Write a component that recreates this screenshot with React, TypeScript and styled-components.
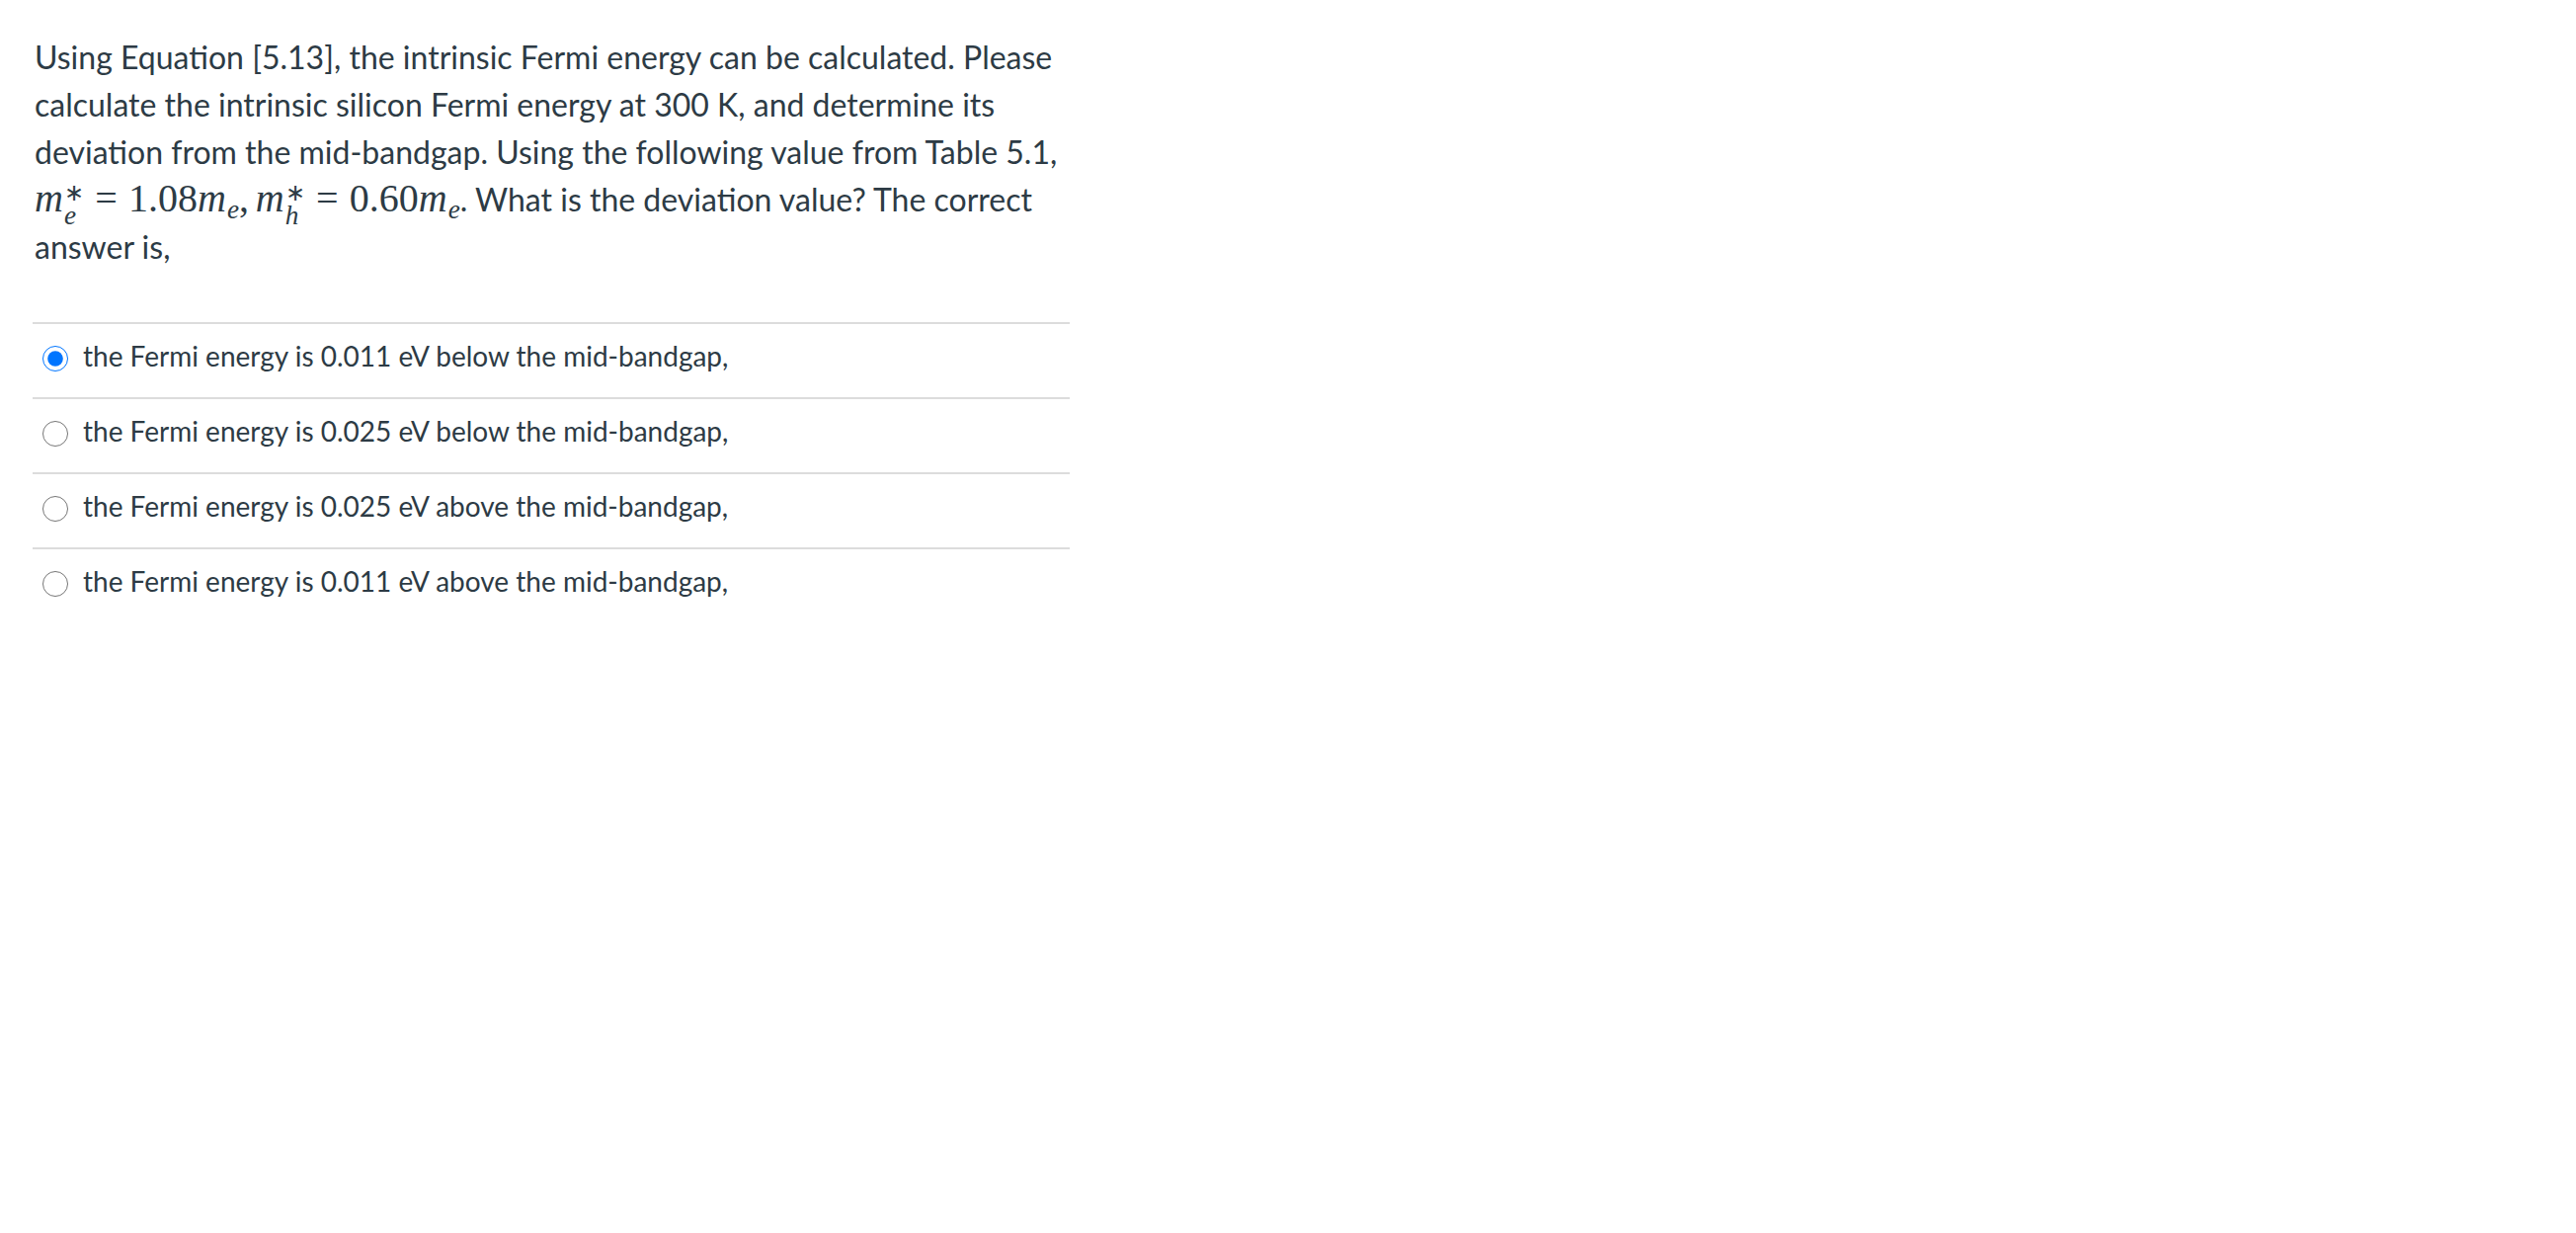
import styled, { createGlobalStyle } from "styled-components";

const GlobalStyle = createGlobalStyle`
  html, body {
    margin: 0;
    padding: 0;
    background: #ffffff;
  }
  body {
    font-family: Lato, "Open Sans", sans-serif;
    color: #2d3b45;
  }
`;

const Page = styled.main`
  padding: 34px 0 0 33px;
`;

const Question = styled.section`
  width: 1050px;
`;

const QuestionText = styled.p`
  margin: 0;
  padding-left: 2px;
  font-size: 32px;
  line-height: 48px;
  color: #2d3b45;
`;

const Formula = styled.span`
  font-family: "Liberation Serif", "Times New Roman", serif;
  font-size: 40px;
  line-height: 0;
  white-space: nowrap;
`;

const Var = styled.i`
  font-style: italic;
`;

const Rel = styled.span`
  margin: 0 0.28em;
`;

const Punct = styled.span`
  margin-right: 0.17em;
`;

// stacked super/subscript; negative margins keep the line box at 48px
const Scripts = styled.span`
  display: inline-flex;
  flex-direction: column;
  vertical-align: 0.4em;
  font-size: 0.68em;
  line-height: 0.9;
  margin: -0.4em 0 -1.3em 0.04em;
`;

const Star = styled.span`
  font-size: 0.9em;
`;

const Sub = styled.i<{ $alone?: boolean }>`
  font-style: italic;
  ${({ $alone }) =>
    $alone &&
    `
    font-size: 0.68em;
    vertical-align: -0.24em;
    margin-left: 0.04em;
    line-height: 0;
  `}
`;

const AnswerList = styled.div`
  margin-top: 52px;
`;

const AnswerRow = styled.label<{ $last?: boolean }>`
  display: flex;
  align-items: center;
  border-top: 2px solid #dcdcdc;
  padding: 8px 0 ${({ $last }) => ($last ? "8px" : "18px")};
  cursor: pointer;
`;

const Radio = styled.input`
  width: 26px;
  height: 26px;
  margin: 6px 15px 0 10px;
  flex: none;
`;

const AnswerText = styled.span`
  font-size: 28px;
  line-height: 48px;
  color: #2d3b45;
`;

const answers = [
  "the Fermi energy is 0.011 eV below the mid-bandgap,",
  "the Fermi energy is 0.025 eV below the mid-bandgap,",
  "the Fermi energy is 0.025 eV above the mid-bandgap,",
  "the Fermi energy is 0.011 eV above the mid-bandgap,",
];

const MassFormula = () => (
  <Formula>
    <Var>m</Var>
    <Scripts>
      <Star>∗</Star>
      <Sub>e</Sub>
    </Scripts>
    <Rel>=</Rel>
    1.08<Var>m</Var>
    <Sub $alone>e</Sub>
    <Punct>,</Punct>
    <Var>m</Var>
    <Scripts>
      <Star>∗</Star>
      <Sub>h</Sub>
    </Scripts>
    <Rel>=</Rel>
    0.60<Var>m</Var>
    <Sub $alone>e</Sub>
  </Formula>
);

export default function App() {
  return (
    <Page>
      <GlobalStyle />
      <Question>
        <QuestionText>
          Using Equation [5.13], the intrinsic Fermi energy can be calculated.
          Please calculate the intrinsic silicon Fermi energy at 300 K, and
          determine its deviation from the mid-bandgap. Using the following
          value from Table 5.1, <MassFormula />. What is the deviation value?
          The correct answer is,
        </QuestionText>
        <AnswerList>
          {answers.map((text, i) => (
            <AnswerRow key={text} $last={i === answers.length - 1}>
              <Radio type="radio" name="answer" defaultChecked={i === 0} />
              <AnswerText>{text}</AnswerText>
            </AnswerRow>
          ))}
        </AnswerList>
      </Question>
    </Page>
  );
}
